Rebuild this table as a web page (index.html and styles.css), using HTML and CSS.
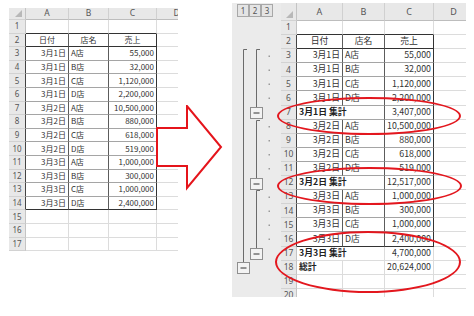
FILE: index.html
```html
<!DOCTYPE html>
<html lang="ja">
<head>
<meta charset="utf-8">
<title>Excel 小計</title>
<link rel="stylesheet" href="styles.css">
</head>
<body>
<div class="page">
  <div class="sheet ls">
    <div class="row hdr"><div class="c rh corner"></div><div class="c ch a">A</div><div class="c ch b">B</div><div class="c ch cc">C</div><div class="c ch d">D</div></div>
    <div class="row"><div class="c rh">1</div><div class="c a tt"></div><div class="c b tt"></div><div class="c cc tt"></div><div class="c d"></div></div>
    <div class="row"><div class="c rh edge">2</div><div class="c a t th m">日付</div><div class="c b t th m">店名</div><div class="c cc t th te m">売上</div><div class="c d"></div></div>
    <div class="row"><div class="c rh edge">3</div><div class="c a t r">3月1日</div><div class="c b t">A店</div><div class="c cc t te r">55,000</div><div class="c d"></div></div>
    <div class="row"><div class="c rh edge">4</div><div class="c a t r">3月1日</div><div class="c b t">B店</div><div class="c cc t te r">32,000</div><div class="c d"></div></div>
    <div class="row"><div class="c rh edge">5</div><div class="c a t r">3月1日</div><div class="c b t">C店</div><div class="c cc t te r">1,120,000</div><div class="c d"></div></div>
    <div class="row"><div class="c rh edge">6</div><div class="c a t r">3月1日</div><div class="c b t">D店</div><div class="c cc t te r">2,200,000</div><div class="c d"></div></div>
    <div class="row"><div class="c rh edge">7</div><div class="c a t r">3月2日</div><div class="c b t">A店</div><div class="c cc t te r">10,500,000</div><div class="c d"></div></div>
    <div class="row"><div class="c rh edge">8</div><div class="c a t r">3月2日</div><div class="c b t">B店</div><div class="c cc t te r">880,000</div><div class="c d"></div></div>
    <div class="row"><div class="c rh edge">9</div><div class="c a t r">3月2日</div><div class="c b t">C店</div><div class="c cc t te r">618,000</div><div class="c d"></div></div>
    <div class="row"><div class="c rh edge">10</div><div class="c a t r">3月2日</div><div class="c b t">D店</div><div class="c cc t te r">519,000</div><div class="c d"></div></div>
    <div class="row"><div class="c rh edge">11</div><div class="c a t r">3月3日</div><div class="c b t">A店</div><div class="c cc t te r">1,000,000</div><div class="c d"></div></div>
    <div class="row"><div class="c rh edge">12</div><div class="c a t r">3月3日</div><div class="c b t">B店</div><div class="c cc t te r">300,000</div><div class="c d"></div></div>
    <div class="row"><div class="c rh edge">13</div><div class="c a t r">3月3日</div><div class="c b t">C店</div><div class="c cc t te r">1,000,000</div><div class="c d"></div></div>
    <div class="row"><div class="c rh edge">14</div><div class="c a t tl r">3月3日</div><div class="c b t tl">D店</div><div class="c cc t te tl r">2,400,000</div><div class="c d"></div></div>
    <div class="row"><div class="c rh">15</div><div class="c a"></div><div class="c b"></div><div class="c cc"></div><div class="c d"></div></div>
    <div class="row"><div class="c rh">16</div><div class="c a"></div><div class="c b"></div><div class="c cc"></div><div class="c d"></div></div>
    <div class="row"><div class="c rh">17</div><div class="c a"></div><div class="c b"></div><div class="c cc"></div><div class="c d"></div></div>
  </div>

  <div class="sheet rs">
    <div class="outline">
      <div class="olhead">
        <span class="lvl">1</span><span class="lvl">2</span><span class="lvl">3</span>
      </div>
      <svg class="olsvg" width="49" height="276" viewBox="0 0 49 276">
        <g fill="none" stroke="#6b6b6b" stroke-width="1">
          <path d="M15 28.5 H11.5 V242"/>
          <path d="M28 28.5 H24.5 V86"/>
          <path d="M28 99.5 H24.5 V157"/>
          <path d="M28 169.5 H24.5 V227"/>
        </g>
        <g fill="#f3f3f3" stroke="#8f8f8f" stroke-width="1">
          <rect x="5.5" y="241.5" width="12" height="11"/>
          <rect x="18.5" y="86.5" width="12" height="11"/>
          <rect x="18.5" y="157.5" width="12" height="11"/>
          <rect x="18.5" y="227.5" width="12" height="11"/>
        </g>
        <g stroke="#333" stroke-width="1">
          <path d="M8.5 247 H14.5"/>
          <path d="M21.5 92 H27.5"/>
          <path d="M21.5 163 H27.5"/>
          <path d="M21.5 233 H27.5"/>
        </g>
        <g fill="#9a9a9a">
          <rect x="36.5" y="34.5" width="1.5" height="1.5"/>
          <rect x="36.5" y="48.5" width="1.5" height="1.5"/>
          <rect x="36.5" y="62.5" width="1.5" height="1.5"/>
          <rect x="36.5" y="76.5" width="1.5" height="1.5"/>
          <rect x="36.5" y="105" width="1.5" height="1.5"/>
          <rect x="36.5" y="119" width="1.5" height="1.5"/>
          <rect x="36.5" y="133" width="1.5" height="1.5"/>
          <rect x="36.5" y="147" width="1.5" height="1.5"/>
          <rect x="36.5" y="175.5" width="1.5" height="1.5"/>
          <rect x="36.5" y="189.5" width="1.5" height="1.5"/>
          <rect x="36.5" y="203.5" width="1.5" height="1.5"/>
          <rect x="36.5" y="217.5" width="1.5" height="1.5"/>
        </g>
      </svg>
    </div>
    <div class="grid">
      <div class="row hdr"><div class="c rh corner"></div><div class="c ch a">A</div><div class="c ch b">B</div><div class="c ch cc">C</div><div class="c ch d">D</div></div>
      <div class="row"><div class="c rh">1</div><div class="c a tt"></div><div class="c b tt"></div><div class="c cc tt"></div><div class="c d"></div></div>
      <div class="row"><div class="c rh edge">2</div><div class="c a t th m">日付</div><div class="c b t th m">店名</div><div class="c cc t th te m">売上</div><div class="c d"></div></div>
      <div class="row"><div class="c rh edge">3</div><div class="c a t r">3月1日</div><div class="c b t">A店</div><div class="c cc t te r">55,000</div><div class="c d"></div></div>
      <div class="row"><div class="c rh edge">4</div><div class="c a t r">3月1日</div><div class="c b t">B店</div><div class="c cc t te r">32,000</div><div class="c d"></div></div>
      <div class="row"><div class="c rh edge">5</div><div class="c a t r">3月1日</div><div class="c b t">C店</div><div class="c cc t te r">1,120,000</div><div class="c d"></div></div>
      <div class="row"><div class="c rh edge">6</div><div class="c a t r">3月1日</div><div class="c b t">D店</div><div class="c cc t te r">2,200,000</div><div class="c d"></div></div>
      <div class="row"><div class="c rh edge">7</div><div class="c ab t bold">3月1日 集計</div><div class="c cc t te r">3,407,000</div><div class="c d"></div></div>
      <div class="row"><div class="c rh edge">8</div><div class="c a t r">3月2日</div><div class="c b t">A店</div><div class="c cc t te r">10,500,000</div><div class="c d"></div></div>
      <div class="row"><div class="c rh edge">9</div><div class="c a t r">3月2日</div><div class="c b t">B店</div><div class="c cc t te r">880,000</div><div class="c d"></div></div>
      <div class="row"><div class="c rh edge">10</div><div class="c a t r">3月2日</div><div class="c b t">C店</div><div class="c cc t te r">618,000</div><div class="c d"></div></div>
      <div class="row"><div class="c rh edge">11</div><div class="c a t r">3月2日</div><div class="c b t">D店</div><div class="c cc t te r">519,000</div><div class="c d"></div></div>
      <div class="row"><div class="c rh edge">12</div><div class="c ab t bold">3月2日 集計</div><div class="c cc t te r">12,517,000</div><div class="c d"></div></div>
      <div class="row"><div class="c rh edge">13</div><div class="c a t r">3月3日</div><div class="c b t">A店</div><div class="c cc t te r">1,000,000</div><div class="c d"></div></div>
      <div class="row"><div class="c rh edge">14</div><div class="c a t r">3月3日</div><div class="c b t">B店</div><div class="c cc t te r">300,000</div><div class="c d"></div></div>
      <div class="row"><div class="c rh edge">15</div><div class="c a t r">3月3日</div><div class="c b t">C店</div><div class="c cc t te r">1,000,000</div><div class="c d"></div></div>
      <div class="row"><div class="c rh edge">16</div><div class="c a t tl r">3月3日</div><div class="c b t tl">D店</div><div class="c cc t te tl r">2,400,000</div><div class="c d"></div></div>
      <div class="row"><div class="c rh">17</div><div class="c ab bold">3月3日 集計</div><div class="c cc r">4,700,000</div><div class="c d"></div></div>
      <div class="row"><div class="c rh">18</div><div class="c a bold">総計</div><div class="c b"></div><div class="c cc r">20,624,000</div><div class="c d"></div></div>
      <div class="row"><div class="c rh">19</div><div class="c a"></div><div class="c b"></div><div class="c cc"></div><div class="c d"></div></div>
      <div class="row"><div class="c rh">20</div><div class="c a"></div><div class="c b"></div><div class="c cc"></div><div class="c d"></div></div>
    </div>
  </div>

  <svg class="arrow" width="67" height="86" viewBox="0 0 67 86">
    <polygon points="1,23 31,23 31,1 65,42 31,83 31,61 1,61" fill="#fff" stroke="#e5141b" stroke-width="2" stroke-linejoin="miter"/>
  </svg>
  <div class="ring ring1"></div>
  <div class="ring ring2"></div>
  <div class="ring ring3"></div>
</div>
</body>
</html>
```
FILE: styles.css
```css
html, body {
  margin: 0;
  padding: 0;
  background: #fff;
}

.page {
  position: relative;
  width: 474px;
  height: 316px;
  display: flex;
  align-items: flex-start;
  padding-left: 9px;
  gap: 54px;
  box-sizing: border-box;
  font-family: "Noto Sans CJK JP", "Noto Sans", sans-serif;
  color: #333;
}

.sheet {
  overflow: hidden;
  flex: none;
}

.ls {
  width: 169px;
  margin-top: 8px;
  font-size: 8px;
}

.rs {
  width: 234px;
  height: 294px;
  margin-top: 3px;
  display: flex;
  font-size: 8.8px;
}

.row {
  display: flex;
}

.ls .row { height: 13.6px; }
.ls .row.hdr { height: 12px; }
.rs .row { height: 14.1px; }
.rs .row.hdr { height: 18px; }

.c {
  box-sizing: border-box;
  height: 100%;
  flex: none;
  display: flex;
  align-items: center;
  padding: 0 2px;
  white-space: nowrap;
  overflow: hidden;
  border-right: 1px solid #dcdcdc;
  border-bottom: 1px solid #dcdcdc;
  line-height: 1;
}

.rh, .ch {
  background: #e8e8e8;
  color: #555;
  justify-content: center;
  font-family: "Noto Sans", "Liberation Sans", sans-serif;
  padding: 0;
}

.rh {
  border-right-color: #c4c4c4;
  border-bottom-color: #d2d2d2;
}

.ch {
  border-right-color: #d0d0d0;
  border-bottom-color: #bdbdbd;
}

.ls .rh { width: 17px; font-size: 8px; }
.ls .a { width: 43px; }
.ls .b { width: 40px; }
.ls .cc { width: 48px; }
.ls .d { width: 40px; }
.ls .ch { font-size: 8.5px; }

.rs .rh { width: 16px; font-size: 8.5px; }
.rs .a { width: 46px; }
.rs .b { width: 42px; }
.rs .ab { width: 88px; }
.rs .cc { width: 49px; }
.rs .d { width: 40px; }
.rs .ch { font-size: 9px; }

.corner {
  position: relative;
}

.corner::after {
  content: "";
  position: absolute;
  right: 3px;
  bottom: 2px;
  width: 0;
  height: 0;
  border-left: 7px solid transparent;
  border-bottom: 7px solid #b8b8b8;
}

.t {
  border-right-color: #5c5c5c;
  border-bottom-color: #a5a5a5;
}

.th, .tt, .tl {
  border-bottom-color: #333;
}

.te {
  border-right-color: #333;
}

.rh.edge {
  border-right-color: #444;
}

.r { justify-content: flex-end; }
.m { justify-content: center; }
.bold { font-weight: bold; color: #222; }

.outline {
  width: 49px;
  flex: none;
  background: #ebebeb;
  display: flex;
  flex-direction: column;
}

.olhead {
  height: 18px;
  box-sizing: border-box;
  padding: 1px 0 0 5px;
  display: flex;
  align-items: flex-start;
}

.lvl {
  box-sizing: border-box;
  width: 12px;
  height: 13px;
  border: 1px solid #a8a8a8;
  background: #e4e4e4;
  color: #555;
  font-family: "Noto Sans", "Liberation Sans", sans-serif;
  font-size: 8px;
  display: flex;
  align-items: center;
  justify-content: center;
}

.olsvg {
  display: block;
}

.grid {
  width: 185px;
  flex: none;
}

.arrow {
  position: absolute;
  left: 156px;
  top: 105px;
}

.ring {
  position: absolute;
  box-sizing: border-box;
  border: 2px solid #e3171e;
  border-radius: 50%;
}

.ring1 { left: 277px; top: 97px; width: 184px; height: 38px; }
.ring2 { left: 277px; top: 167px; width: 185px; height: 38px; }
.ring3 { left: 275px; top: 231px; width: 186px; height: 62px; }
```
